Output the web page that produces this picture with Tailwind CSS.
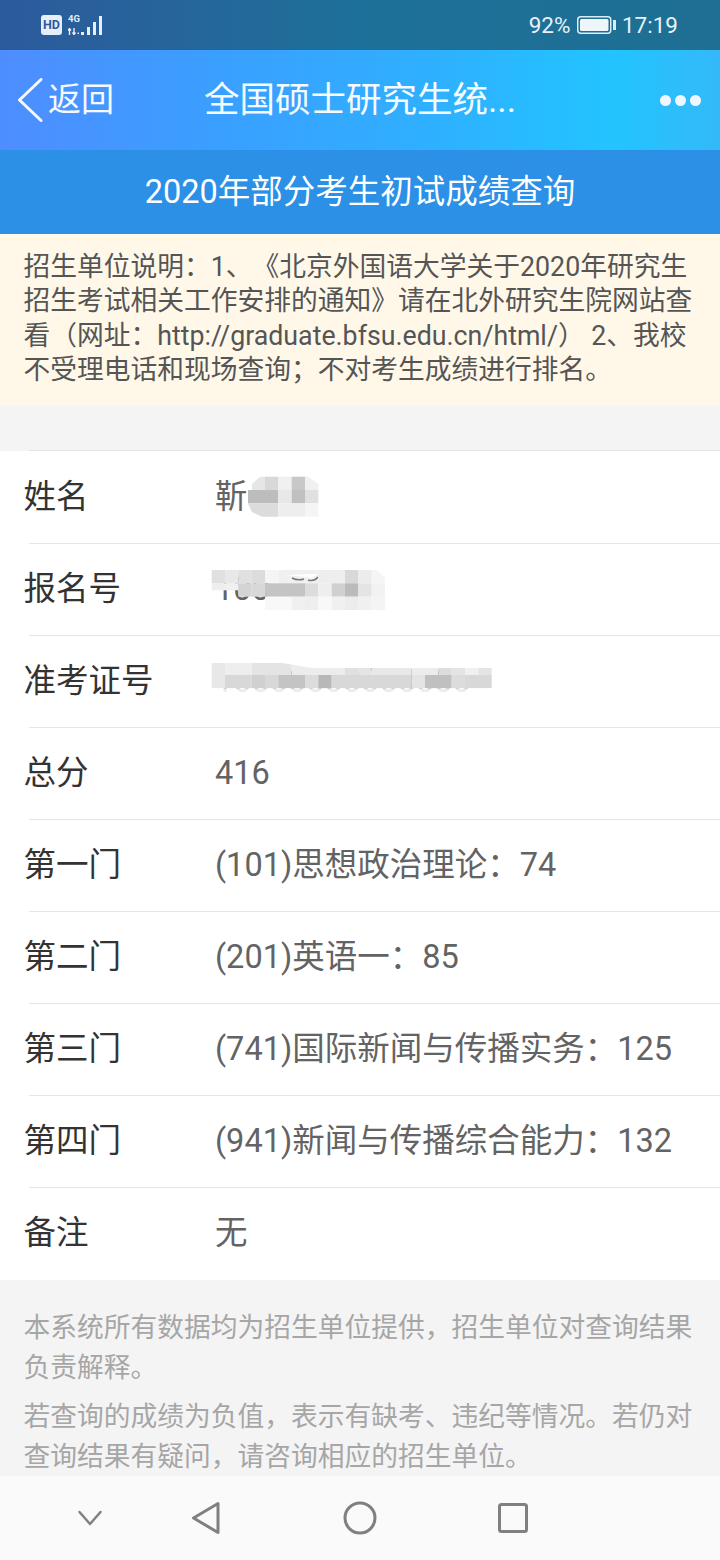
<!DOCTYPE html>
<html lang="zh-CN">
<head>
<meta charset="utf-8">
<script src="https://cdn.jsdelivr.net/npm/@tailwindcss/browser@4"></script>
</head>
<body class="m-0">
<div class="relative w-[720px] h-[1560px] overflow-hidden flex flex-col bg-[#f4f4f4] [text-spacing-trim:space-all] font-['Roboto','Noto_Sans_CJK_SC',sans-serif]">
  <div class="h-[50px] shrink-0 flex items-center justify-between bg-gradient-to-r from-[#2c5a9c] via-[#1d7099] to-[#1f6f93] text-[#e6f2fa]">
    <div class="flex items-center pl-[41px]">
      <div class="w-[21px] h-[20px] rounded-[3px] bg-[#e6eef8] text-[#2c5a9c] text-[12.5px] leading-[20px] font-bold text-center">HD</div>
      <div class="relative w-[12px] h-[20px] ml-[6px] text-[#e6eef8]">
        <span class="absolute left-0 top-[-1px] text-[9.5px] leading-[10px] font-bold">4G</span>
        <svg class="absolute left-0 top-[13px]" width="12" height="7" viewBox="0 0 12 7" fill="none" stroke="#e6eef8" stroke-width="1.4"><path d="M1.5 7V1M0 2.5L1.5 .5L3 2.5"/><path d="M6 0V6M4.5 4.5L6 6.5L7.5 4.5"/><rect x="9.5" y="4.5" width="1.5" height="1.5" fill="#e6eef8" stroke="none"/></svg>
      </div>
      <div class="flex items-end gap-[3px] h-[20px] ml-[1px]">
        <span class="w-[3px] h-[3px] bg-[#e6eef8]"></span>
        <span class="w-[3px] h-[8px] bg-[#e6eef8]"></span>
        <span class="w-[3px] h-[13px] bg-[#e6eef8]"></span>
        <span class="w-[3px] h-[19px] bg-[#e6eef8]"></span>
      </div>
    </div>
    <div class="flex items-center pr-[42px] text-[22.5px] leading-none">
      <span>92%</span>
      <svg class="ml-[7px] mr-[5.5px]" width="39" height="18" viewBox="0 0 39 18"><rect x="0.75" y="0.75" width="33" height="16.5" rx="3" fill="none" stroke="#dcecf6" stroke-width="1.5"/><rect x="3" y="3" width="28.5" height="12" rx="1.5" fill="#eef5fb"/><rect x="36" y="4" width="3" height="10" fill="#dcecf6"/></svg>
      <span>17:19</span>
    </div>
  </div>

  <div class="h-[100px] shrink-0 relative flex items-center justify-center text-white bg-[linear-gradient(90deg,#4f8dff_0%,#3a9fff_30%,#2fb0ff_60%,#22c4ff_85%,#34b9f8_100%)]">
    <div class="absolute left-[17px] top-[28px] flex items-center">
      <svg width="27" height="44" viewBox="0 0 27 44" fill="none"><path d="M24 1.5 L2.5 22 L24 42.5" stroke="#fff" stroke-width="3" stroke-linecap="round" stroke-linejoin="round" opacity="0.95"/></svg>
      <span class="ml-[4px] text-[33px] leading-[44px] text-[#f4faff]">返回</span>
    </div>
    <span class="pt-[2px] text-[35.5px] leading-none text-[#f6fbff]">全国硕士研究生统...</span>
    <div class="absolute right-[19px] top-[45px] flex gap-[4px]">
      <span class="w-[11px] h-[11px] rounded-full bg-[#eef6ff]"></span>
      <span class="w-[11px] h-[11px] rounded-full bg-[#eef6ff]"></span>
      <span class="w-[11px] h-[11px] rounded-full bg-[#eef6ff]"></span>
    </div>
  </div>

  <div class="h-[84px] shrink-0 flex items-center justify-center bg-[#2b90e6] text-white text-[32.5px] leading-none">2020年部分考生初试成绩查询</div>

  <div class="h-[171px] shrink-0 bg-[#fff8e9] pl-[23.5px] pt-[15.5px] text-[26.75px] leading-[34.5px] text-[#555555] whitespace-nowrap">
    <p>招生单位说明：1、《北京外国语大学关于2020年研究生</p>
    <p>招生考试相关工作安排的通知》请在北外研究生院网站查</p>
    <p>看（网址：http://graduate.bfsu.edu.cn/html/） 2、我校</p>
    <p>不受理电话和现场查询；不对考生成绩进行排名。</p>
  </div>

  <div class="h-[45px] shrink-0"></div>
  <div class="h-px shrink-0 ml-[29px] bg-[#e4e4e4]"></div>

  <div class="shrink-0 bg-white h-[829px] text-[32.5px] leading-none">
    <div class="h-[92px] flex items-center pl-[23.5px]">
      <span class="w-[191.5px] text-[#333333]">姓名</span><span class="text-[#636363]">靳</span>
    </div>
    <div class="h-[92px] ml-[29px] border-t border-[#e6e6e6] flex items-center">
      <span class="w-[191.5px] -ml-[5.5px] text-[#333333]">报名号</span><span class="text-[#636363]">100</span>
    </div>
    <div class="h-[92px] ml-[29px] border-t border-[#e6e6e6] flex items-center">
      <span class="w-[191.5px] -ml-[5.5px] text-[#333333]">准考证号</span><span class="text-[#636363]">10000000000000</span>
    </div>
    <div class="h-[92px] ml-[29px] border-t border-[#e6e6e6] flex items-center">
      <span class="w-[191.5px] -ml-[5.5px] text-[#333333]">总分</span><span class="text-[#636363]">416</span>
    </div>
    <div class="h-[92px] ml-[29px] border-t border-[#e6e6e6] flex items-center">
      <span class="w-[191.5px] -ml-[5.5px] text-[#333333]">第一门</span><span class="text-[#636363]">(101)思想政治理论：74</span>
    </div>
    <div class="h-[92px] ml-[29px] border-t border-[#e6e6e6] flex items-center">
      <span class="w-[191.5px] -ml-[5.5px] text-[#333333]">第二门</span><span class="text-[#636363]">(201)英语一：85</span>
    </div>
    <div class="h-[92px] ml-[29px] border-t border-[#e6e6e6] flex items-center">
      <span class="w-[191.5px] -ml-[5.5px] text-[#333333]">第三门</span><span class="text-[#636363]">(741)国际新闻与传播实务：125</span>
    </div>
    <div class="h-[92px] ml-[29px] border-t border-[#e6e6e6] flex items-center">
      <span class="w-[191.5px] -ml-[5.5px] text-[#333333]">第四门</span><span class="text-[#636363]">(941)新闻与传播综合能力：132</span>
    </div>
    <div class="h-[92px] ml-[29px] border-t border-[#e6e6e6] flex items-center">
      <span class="w-[191.5px] -ml-[5.5px] text-[#333333]">备注</span><span class="text-[#636363]">无</span>
    </div>
  </div>

  <div class="h-[196px] shrink-0 pl-[23.5px] pt-[28px] text-[26.75px] leading-[40px] text-[#a6a6a6] whitespace-nowrap overflow-hidden">
    <p>本系统所有数据均为招生单位提供，招生单位对查询结果</p>
    <p>负责解释。</p>
    <p class="mt-[9px]">若查询的成绩为负值，表示有缺考、违纪等情况。若仍对</p>
    <p>查询结果有疑问，请咨询相应的招生单位。</p>
  </div>

  <div class="h-[84px] shrink-0 bg-[#fafafa] relative">
    <svg class="absolute left-0 top-0" width="720" height="84" viewBox="0 0 720 84" fill="none" stroke="#808080">
      <path d="M79.5 36 L90 48 L100.5 36" stroke-width="2.5" stroke-linecap="round" stroke-linejoin="round"/>
      <path d="M218 27.5 L193.5 42 L218 56.5 Z" stroke-width="3" stroke-linejoin="round"/>
      <circle cx="360" cy="42" r="15" stroke-width="3"/>
      <rect x="499.5" y="28.5" width="27" height="27" rx="2" stroke-width="3"/>
    </svg>
  </div>

  <svg class="absolute left-0 top-[460px] blur-[0.6px] pointer-events-none" width="720" height="240" viewBox="0 460 720 240">
    <!-- name -->
    <rect x="248" y="490" width="30.3" height="13.4" fill="#bdbdbd"/>
    <path d="M252 490 L252 484 L260 476.7 L265 476.7 L265 490 Z" fill="#e6e6e6"/>
    <rect x="265" y="476.7" width="13.4" height="13.4" fill="#d8d8d8"/>
    <rect x="278.3" y="476.7" width="13.4" height="13.4" fill="#f0f0f0"/>
    <rect x="291.7" y="476.7" width="13.4" height="13.4" fill="#c8c8c8"/>
    <path d="M305 476.7 L308 476.7 L318.3 484 L318.3 490 L305 490 Z" fill="#f0f0f0"/>
    <rect x="278.3" y="490" width="13.4" height="13.4" fill="#e8e8e8"/>
    <rect x="291.7" y="490" width="13.4" height="13.4" fill="#c0c0c0"/>
    <rect x="305" y="490" width="13.3" height="13.4" fill="#e0e0e0"/>
    <path d="M248 503.4 L278.3 503.4 L278.3 516.7 L262 516.7 L252 512 Z" fill="#dcdcdc"/>
    <rect x="278.3" y="503.3" width="26.7" height="13.4" fill="#eeeeee"/>
    <rect x="305" y="503.3" width="13.3" height="13.4" fill="#f5f5f5"/>
    <!-- registration number -->
    <rect x="211.7" y="570" width="13.4" height="13.4" fill="#e0e0e0"/>
    <rect x="225" y="570" width="13.4" height="13.4" fill="#e8e8e8"/>
    <rect x="238.3" y="570" width="13.4" height="13.4" fill="#e0e0e0"/>
    <rect x="251.7" y="570" width="13.4" height="13.4" fill="#dcdcdc"/>
    <rect x="265" y="570" width="13.4" height="13.4" fill="#f5f5f5"/>
    <rect x="278.3" y="570" width="40" height="13.4" fill="#f0f0f0"/>
    <path d="M283 575 L318 574 L312 578 L297 576 Z" fill="#ffffff"/>
    <path d="M292 578 Q298 581 304 579 M308 580 Q314 582 318 577" stroke="#777777" stroke-width="1.5" fill="none"/>
    <rect x="318.3" y="570" width="26.7" height="13.4" fill="#eeeeee"/>
    <rect x="345" y="570" width="13.4" height="13.4" fill="#d8d8d8"/>
    <rect x="358.3" y="570" width="13.4" height="13.4" fill="#ececec"/>
    <path d="M371.7 570 L376 570 L385 577 L385 583.4 L371.7 583.4 Z" fill="#f5f5f5"/>
    <rect x="211.7" y="583.3" width="13.4" height="7" fill="#eeeeee"/>
    <rect x="225" y="583.3" width="13.4" height="7" fill="#f0f0f0"/>
    <rect x="238.3" y="583.3" width="13.4" height="13.4" fill="#d4d4d4"/>
    <rect x="251.7" y="583.3" width="13.4" height="13.4" fill="#d8d8d8"/>
    <rect x="265" y="583.3" width="40" height="13.4" fill="#c4c4c4"/>
    <rect x="305" y="583.3" width="13.4" height="13.4" fill="#dcdcdc"/>
    <rect x="318.3" y="583.3" width="13.4" height="13.4" fill="#eeeeee"/>
    <rect x="331.7" y="583.3" width="13.4" height="13.4" fill="#d0d0d0"/>
    <rect x="345" y="583.3" width="13.4" height="13.4" fill="#bbbbbb"/>
    <rect x="358.3" y="583.3" width="13.4" height="13.4" fill="#e4e4e4"/>
    <rect x="371.7" y="583.3" width="13.3" height="13.4" fill="#f2f2f2"/>
    <rect x="265" y="596.7" width="26.7" height="13.3" fill="#f8f8f8"/>
    <rect x="291.7" y="596.7" width="13.4" height="13.3" fill="#f0f0f0"/>
    <rect x="305" y="596.7" width="13.4" height="13.3" fill="#eeeeee"/>
    <rect x="318.3" y="596.7" width="13.4" height="13.3" fill="#f8f8f8"/>
    <rect x="331.7" y="596.7" width="13.4" height="13.3" fill="#f0f0f0"/>
    <rect x="345" y="596.7" width="13.4" height="13.3" fill="#ececec"/>
    <rect x="358.3" y="596.7" width="13.4" height="13.3" fill="#f0f0f0"/>
    <rect x="371.7" y="596.7" width="13.3" height="13.3" fill="#f4f4f4"/>
    <!-- exam number -->
    <rect x="211.7" y="663" width="13.4" height="12" fill="#e8e8e8"/>
    <rect x="225" y="663" width="26.7" height="12" fill="#eeeeee"/>
    <rect x="251.7" y="663" width="40" height="12" fill="#e4e4e4"/>
    <rect x="291.7" y="663" width="53.4" height="12" fill="#ececec"/>
    <rect x="345" y="663" width="13.4" height="12" fill="#e0e0e0"/>
    <rect x="358.3" y="663" width="13.4" height="12" fill="#e4e4e4"/>
    <rect x="371.7" y="663" width="40" height="12" fill="#e8e8e8"/>
    <rect x="411.7" y="663" width="26.7" height="12" fill="#ececec"/>
    <rect x="438.3" y="663" width="13.4" height="12" fill="#dcdcdc"/>
    <rect x="451.7" y="663" width="13.4" height="12" fill="#e4e4e4"/>
    <rect x="465" y="663" width="13.4" height="12" fill="#f0f0f0"/>
    <rect x="478.3" y="663" width="13.4" height="12" fill="#e4e4e4"/>
    <path d="M211 660 L265 660 L312 668 L492 668 L492 660 Z" fill="#ffffff"/>
    <rect x="211.7" y="675" width="13.4" height="13.3" fill="#e8e8e8"/>
    <rect x="225" y="675" width="26.7" height="13.3" fill="#d8d8d8"/>
    <rect x="251.7" y="675" width="13.4" height="13.3" fill="#d0d0d0"/>
    <rect x="265" y="675" width="13.4" height="13.3" fill="#d8d8d8"/>
    <rect x="278.3" y="675" width="26.7" height="13.3" fill="#c4c4c4"/>
    <rect x="305" y="675" width="13.4" height="13.3" fill="#dcdcdc"/>
    <rect x="318.3" y="675" width="13.4" height="13.3" fill="#b8b8b8"/>
    <rect x="331.7" y="675" width="13.4" height="13.3" fill="#d8d8d8"/>
    <rect x="345" y="675" width="66.7" height="13.3" fill="#d8d8d8"/>
    <rect x="411.7" y="675" width="13.4" height="13.3" fill="#e4e4e4"/>
    <rect x="425" y="675" width="26.7" height="13.3" fill="#c0c0c0"/>
    <rect x="451.7" y="675" width="13.4" height="13.3" fill="#dcdcdc"/>
    <rect x="465" y="675" width="26.7" height="13.3" fill="#d8d8d8"/>
    <rect x="212" y="688.3" width="280" height="7" fill="#ffffff" opacity="0.88"/>
  </svg>
</div>
</body>
</html>
